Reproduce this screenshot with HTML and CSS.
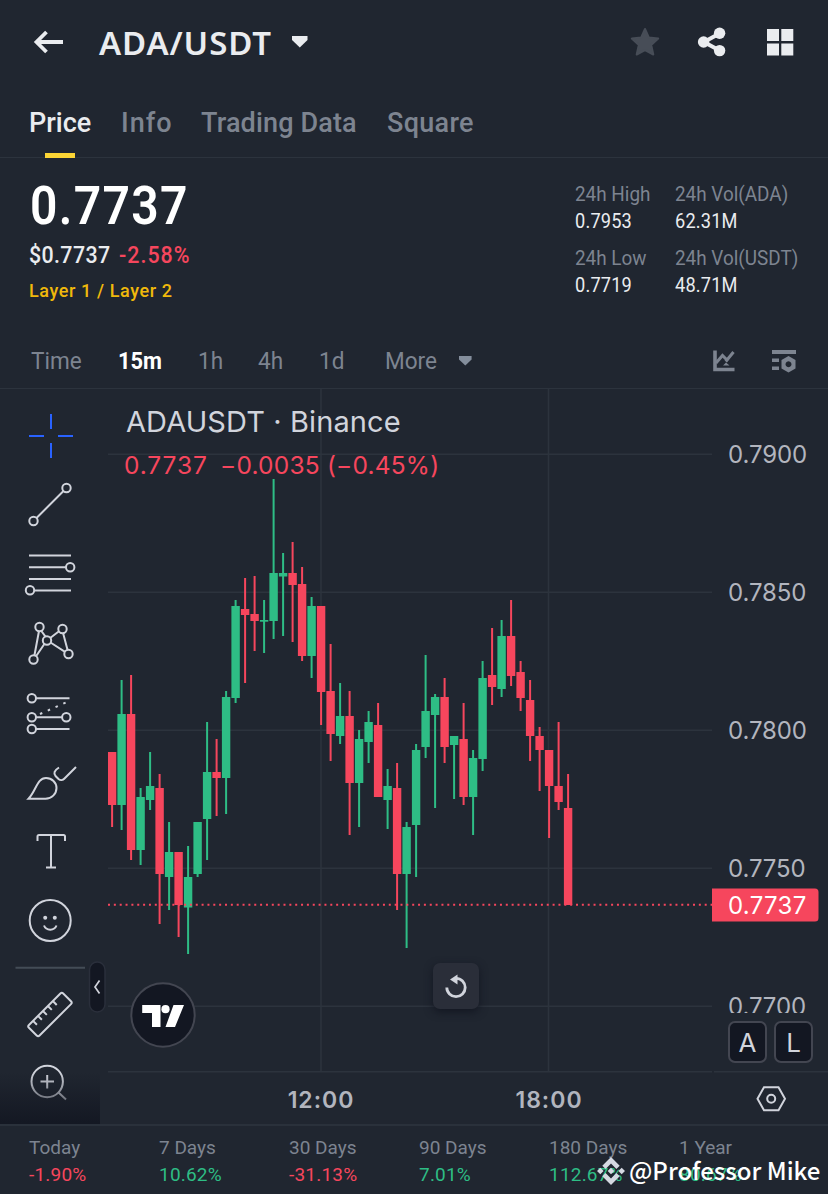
FILE: index.html
```html
<!DOCTYPE html>
<html lang="en">
<head>
<meta charset="utf-8">
<title>ADA/USDT</title>
<link rel="stylesheet" href="styles.css">
</head>
<body>
<div class="app">
  <header class="topbar">
    <svg class="back" width="32" height="26" viewBox="0 0 32 26"><path d="M30 13H5M13.500 3 3.500 13l10 10" fill="none" stroke="#eaecef" stroke-width="3.800"/></svg>
    <h1 class="pair">ADA/USDT</h1>
    <svg class="caret" width="16" height="12" viewBox="0 0 16 12"><path d="M0 0h15.500v4L7.800 11.500 0 4z" fill="#eaecef"/></svg>
    <div class="actions">
      <svg width="30" height="30" viewBox="0 0 30 30"><path d="M15 2l3.900 8.600 9.300 1-7 6.300 2.100 9.600-8.300-4.500-8.300 4.500 2.100-9.600-7-6.300 9.300-1z" fill="#474d57" stroke="#474d57" stroke-width="2" stroke-linejoin="round"/></svg>
      <svg width="30" height="30" viewBox="0 0 30 30"><path d="M22.500 6.500 7 15l15.500 8.500" fill="none" stroke="#eaecef" stroke-width="4"/><g fill="#eaecef"><circle cx="22.600" cy="6.200" r="5.700"/><circle cx="6.600" cy="15" r="5.700"/><circle cx="22.600" cy="23.600" r="5.700"/></g></svg>
      <svg width="27" height="27" viewBox="0 0 27 27"><path d="M0 0h12v12H0zM14.300 0h12v12h-12zM0 14.500h12v12H0zM14.300 14.500h12v12h-12z" fill="#eaecef"/></svg>
    </div>
  </header>

  <nav class="tabs">
    <a class="tab active t-price">Price</a><a class="tab t-info">Info</a><a class="tab t-data">Trading Data</a><a class="tab t-square">Square</a>
  </nav>

  <section class="summary">
    <div class="quote">
      <div class="last">0.7737</div>
      <div class="fiat"><span class="usd">$0.7737</span><span class="chg">-2.58%</span></div>
      <div class="tag">Layer 1 / Layer 2</div>
    </div>
    <dl class="stats">
      <div><dt>24h High</dt><dd>0.7953</dd></div>
      <div><dt>24h Vol(ADA)</dt><dd>62.31M</dd></div>
      <div><dt>24h Low</dt><dd>0.7719</dd></div>
      <div><dt>24h Vol(USDT)</dt><dd>48.71M</dd></div>
    </dl>
  </section>

  <div class="intervals">
    <span class="i-time">Time</span><span class="i-15 on">15m</span><span class="i-1h">1h</span><span class="i-4h">4h</span><span class="i-1d">1d</span><span class="i-more">More</span>
    <svg width="13" height="10" viewBox="0 0 13 10"><path d="M0 0h12.600v3.500L6.300 9.500 0 3.500z" fill="#848e9c"/></svg>
    <div class="tools">
      <svg width="22" height="22" viewBox="0 0 22 22"><g fill="none" stroke="#7d8490" stroke-width="3.600"><path d="M2 .5v19h19.500"/><path d="M3 13l6.500-7.500 4.500 4.500 6.500-8" stroke-width="3"/></g><path d="M11.500 10h4l-2 2.500zM10 15.500l3-3 3.500 3z" fill="#7d8490"/></svg>
      <svg width="25" height="24" viewBox="0 0 25 24"><g fill="#7d8490"><path d="M0 1h24v4H0zM0 9.500h7v3.500H0zM0 17.500h7V21H0z"/><path fill-rule="evenodd" d="M16.500 7l7 4v8.500l-7 4-7-4V11zm0 5.300a3 3 0 1 0 .01 0z"/></g></svg>
    </div>
  </div>

  <main class="chart">
    <aside class="toolbar">
      <svg width="108" height="735" viewBox="0 389 108 735">
        <defs><linearGradient id="fade" x1="0" y1="0" x2="0" y2="1"><stop offset="0" stop-color="#131722" stop-opacity="0"/><stop offset="1" stop-color="#131722" stop-opacity=".95"/></linearGradient></defs>
        <path d="M51 414v15M51 443v15M29 436h15M58 436h15" stroke="#2962ff" stroke-width="2"/>
        <g fill="none" stroke="#d1d4dc" stroke-width="2">
          <path d="M36.500 518 63.500 491"/><circle cx="33.500" cy="521" r="4.200"/><circle cx="66.500" cy="488" r="4.200"/>
          <path d="M29 555.500h42M29 567.200h37M29 579h42M34 590.500h37"/><circle cx="70.200" cy="567.200" r="4.200"/><circle cx="30" cy="590.300" r="4.200"/>
          <path d="M39 631 34.500 655M41 630.500l4.500 6.200M44.700 643.500 36.200 656M50.500 637.800l8.500-6.500M50.500 642.500l14.500 9.300M63 632.800l4.500 17"/><circle cx="39.500" cy="627" r="4.200"/><circle cx="62.500" cy="629" r="4.200"/><circle cx="47" cy="640.500" r="4.200"/><circle cx="33.500" cy="659.500" r="4.200"/><circle cx="68.500" cy="654" r="4.200"/>
          <path d="M36 698.200h33.500M36 717.200h26M36 729h33.500"/><path d="M40 714l27-12" stroke-dasharray="2.500 6"/><circle cx="31.800" cy="698.200" r="4.200"/><circle cx="31.800" cy="717.200" r="4.200"/><circle cx="66.300" cy="717.200" r="4.200"/><circle cx="31.800" cy="729" r="4.200"/>
          <path d="M28.500 798.700C36 791 37 778 46 778c6 0 10.500 4.500 10.500 10 0 6-5 10.700-11 10.700zM59 767.500c-5 3-5.500 6-3.500 8.500l3 3c2 1.700 4.500 1.200 6-.5L76 767"/>
          <path d="M37.500 841v-4.500q0-1.500 1.500-1.500h24.500q1.500 0 1.500 1.500v4.500M51 835v32.500M46 867.500h10"/>
          <circle cx="50.200" cy="920.500" r="20.500"/><path d="M44 925.500c2 5.500 10.500 5.500 12.500 0"/>
          <g transform="rotate(-45 50 1014.500)"><rect x="25.700" y="1007" width="48.500" height="15" rx="2"/><path d="M33.500 1007v5.500M40.500 1007v5.500M47.500 1007v5.500M54.500 1007v5.500M61.500 1007v5.500"/></g>
          <circle cx="47.200" cy="1081.500" r="15.700"/><path d="M40.500 1081.500h13.500M47.200 1075v13.500M58.500 1092.500l7.500 7"/>
        </g>
        <g fill="#d1d4dc"><circle cx="45.200" cy="917.700" r="2"/><circle cx="54.800" cy="917.700" r="2"/></g>
        <path d="M15.500 967.700h69.500" stroke="#434c56" stroke-width="2"/>
        <rect y="1072" width="100" height="52" fill="url(#fade)"/>
        <rect x="89.500" y="962" width="15.500" height="50" rx="7.700" fill="#131722" stroke="#2a2f3b" stroke-width="1.500"/>
        <path d="M99.500 980.500 95 987l4.500 6.500" fill="none" stroke="#d1d4dc" stroke-width="1.700"/>
      </svg>
    </aside>

    <div class="plot">
      <svg id="candles" width="720" height="735" viewBox="108 389 720 735">
        <path d="M108 454.300h604M108 592.300h604M108 730.300h604M108 868.300h604M108 1006.300h604M321 389v682M548.500 389v682M108 1071.700h604M714 1071.700h114" stroke="#2c333d" stroke-width="1.600" fill="none"/>
      </svg>
      <div class="legend">
        <div class="symbol">ADAUSDT · Binance</div>
        <div class="delta"><span class="close">0.7737</span><span>−0.0035 (−0.45%)</span></div>
      </div>
      <svg class="tv" width="66" height="66" viewBox="0 0 66 66"><circle cx="33" cy="33" r="31.700" fill="#131722" stroke="#434651" stroke-width="2"/><path d="M12.200 23h18.300v22h-8.500V31h-9.800zM43.500 23h10.500l-9 22h-9.500z" fill="#fff"/><circle cx="35.500" cy="27.200" r="4.100" fill="#fff"/></svg>
      <div class="reset"><svg width="24" height="26" viewBox="0 0 24 26"><path d="M2.800 14.500a9.200 9.200 0 1 0 9.200-9.200" fill="none" stroke="#d1d4dc" stroke-width="2.800"/><path d="M6 6.500 13.500 1.500v10z" fill="#d1d4dc"/></svg></div>
      <div class="scale"><span>A</span><span>L</span></div>
    </div>
  </main>

  <footer class="periods">
    <div><span>Today</span><b class="down">-1.90%</b></div>
    <div><span>7 Days</span><b>10.62%</b></div>
    <div><span>30 Days</span><b class="down">-31.13%</b></div>
    <div><span>90 Days</span><b>7.01%</b></div>
    <div><span>180 Days</span><b>112.67%</b></div>
    <div><span>1 Year</span><b>80.67%</b></div>
    <div class="credit">
      <svg width="28" height="28" viewBox="0 0 28 28" fill="#d5d9e2"><path d="M14 0l8.700 8.700-3.300 3.300L14 6.600 8.600 12 5.300 8.700zM14 28l-8.700-8.700L8.600 16l5.400 5.400 5.400-5.400 3.300 3.300zM3.300 10.700 6.600 14l-3.300 3.300L0 14zM24.700 10.700 28 14l-3.300 3.300-3.300-3.300zM14 10.700l3.300 3.300-3.300 3.300-3.300-3.300z"/></svg>
      <span>@Professor Mike</span>
    </div>
  </footer>
</div>
<script src="chart.js"></script>
</body>
</html>
```
FILE: styles.css
```css
* { box-sizing: border-box; }
body { margin: 0; background: #202630; color: #eaecef; font-family: Roboto, "Liberation Sans", sans-serif; }
svg { display: block; flex: none; }
.app { width: 828px; height: 1194px; overflow: hidden; display: flex; flex-direction: column; }

.topbar { height: 87px; flex: none; display: flex; align-items: center; padding: 0 34px 0 33px; }
.pair { margin: -2px 0 0 34px; width: 194px; font: 600 33px/40px "Noto Sans", sans-serif; letter-spacing: .9px; white-space: nowrap; }
.back { margin-top: -3px; }
.caret { margin-top: -4px; margin-left: -1px; }
.actions { margin-left: auto; margin-top: -3px; display: flex; align-items: center; gap: 37px; }
.actions svg:last-child { margin-left: 3px; }

.tabs { height: 71px; flex: none; display: flex; padding: 16px 0 0 29px; border-bottom: 1px solid #2c333d; font-weight: 500; font-size: 27px; line-height: 40px; }
.tab { position: relative; color: #7d8490; height: 55px; white-space: nowrap; }
.tab.active { color: #eaecef; }
.tab.active::after { content: ""; position: absolute; left: 16px; bottom: 0; width: 30px; height: 5px; background: #fcd535; }
.t-price { width: 92px; }
.t-info { width: 80px; letter-spacing: 1px; }
.t-data { width: 186px; letter-spacing: .15px; }
.t-square { letter-spacing: .3px; }

.summary { height: 177px; flex: none; display: flex; justify-content: space-between; padding: 18px 24px 0 29px; }
.last { font-weight: 600; font-size: 54px; line-height: 60px; color: #fff; letter-spacing: 1.5px; transform: scaleX(.89); transform-origin: left; padding-left: 1px; }
.fiat { display: flex; font-weight: 500; font-size: 23px; line-height: 30px; margin-top: 5px; }
.fiat span { transform: scaleX(.93); transform-origin: left; letter-spacing: .4px; }
.usd { width: 90px; }
.fiat .chg { color: #f6465d; letter-spacing: 1.1px; }
.tag { font-weight: 500; font-size: 18px; line-height: 24px; color: #f0b90b; margin-top: 8px; letter-spacing: .6px; }
.stats { margin: 5px 0 0; display: grid; grid-template-columns: 100px 129px; grid-auto-rows: 63.500px; font-size: 20px; line-height: 27px; white-space: nowrap; }
.stats dt { color: #7d8490; transform: scaleX(.945); transform-origin: left; }
.stats dd { margin: 0; transform: scaleX(.91); transform-origin: left; letter-spacing: .2px; }

.intervals { height: 54px; flex: none; display: flex; align-items: center; padding: 0 31px 1px 31px; border-bottom: 1px solid #2c333d; font-size: 24px; color: #7d8490; white-space: nowrap; }
.intervals span { transform: scaleX(.94); transform-origin: left; }
.intervals .on { color: #fff; font-weight: 700; transform: scaleX(.91); }
.i-time { width: 87px; }
.i-15 { width: 80px; }
.i-1h { width: 60px; }
.i-4h { width: 61px; }
.i-1d { width: 66px; }
.i-more { width: 74px; }
.tools { margin-left: auto; display: flex; gap: 37px; align-items: center; }

.chart { height: 735px; flex: none; display: grid; grid-template-columns: 108px 720px; }
.plot { position: relative; font-family: Inter, sans-serif; }
.plot text { font-family: Inter, sans-serif; font-size: 24px; letter-spacing: -.1px; }
.plot .hour { font-weight: 600; font-size: 23px; letter-spacing: 1px; }
.legend { position: absolute; left: 16px; top: 13px; }
.symbol { font-size: 29px; line-height: 40px; color: #d1d4dc; letter-spacing: .1px; padding-left: 2px; }
.delta { display: flex; font-size: 24.500px; line-height: 45px; color: #f6465d; letter-spacing: .2px; margin-top: 1px; }
.delta .close { width: 96px; letter-spacing: .9px; }
.tv { position: absolute; left: 22px; top: 593px; }
.reset { position: absolute; left: 325px; top: 574px; width: 46px; height: 46px; border-radius: 7px; background: #2a2e39; box-shadow: 0 3px 8px #131722; display: flex; align-items: center; justify-content: center; }
.scale { position: absolute; left: 620px; top: 632px; display: flex; gap: 7px; }
.scale span { width: 39px; height: 42px; border: 2px solid #434651; border-radius: 7px; background: #131722; color: #d1d4dc; font-size: 26px; line-height: 39px; text-align: center; }

.periods { position: relative; flex: 1; border-top: 2px solid #2a313b; display: grid; grid-template-columns: repeat(6, 130px); padding: 8px 0 0 29px; font-size: 19px; }
.periods div { line-height: 27px; }
.periods span, .periods b { display: block; white-space: nowrap; }
.periods div > span { color: #7d8490; }
.periods b { font-weight: 400; color: #2ebd85; letter-spacing: .2px; }
.periods b.down { color: #f6465d; }
.periods .credit { position: absolute; left: 597px; top: 28px; display: flex; align-items: center; gap: 4px; }
.periods .credit svg { margin-top: 1px; }
.periods .credit span { color: #fff; font: 500 24px/34px "Noto Sans CJK SC", sans-serif; margin-top: -1px; }
```
FILE: chart.js
```js
// Each candle: [direction, high, open/close top, open/close bottom, low] in chart pixels
const candles = [
  ["d",752,752,805,827],["u",680,714,805,830],["d",675,714,850,860],["u",788,797,850,865],["u",752,786,800,810],
  ["d",774,788,874,924],["u",822,852,877,910],["d",852,852,905,937],["u",846,877,907.5,954],["u",822,822,874,877],
  ["u",722,772,819,860],["d",739,772,778,816],["u",691,697,778,814],["u",600,606,698,703],["d",578,609,615,683],
  ["d",576,614,621,651],["u",600,620,621.7,653],["u",479,573,621,639],["u",553,573,576.5,636],["d",542,573,585,642],
  ["d",567,584,656,661],["u",597,606,656,678],["d",606,606,692,725],["d",644,691,734,761],["u",683,716,736,744],
  ["d",691,716,783,835],["u",730,739,783,827],["u",711,722,742,763],["d",703,725,797,797],["u",769,786,800,829],
  ["d",763,788,874,910],["u",822,827,874,948],["u",744,750,825,877],["u",655,711,747,758],["u",694,697,715,808],
  ["d",678,697,747,763],["u",736,736,745,799],["d",703,739,797,805],["u",750,758,797,835],["u",661,678,759,771],
  ["d",628,675,687,705],["u",620,636,689,697],["d",600,636,676,686],["d",661,672,698,711],["d",680,700,736,761],
  ["d",727,736,750,791],["d",750,750,786,838],["d",722,786,802,810],["d",774,808,905,905]
];
let out = "";
candles.forEach(([dir, high, top, bottom, low], i) => {
  const x = 112.1 + i * 9.5;
  const color = dir === "u" ? "#2ebd85" : "#f6465d";
  out += `<rect x="${x - 1}" y="${high}" width="2" height="${low - high}" fill="${color}"/>`;
  out += `<rect x="${x - 4.2}" y="${top}" width="8.4" height="${bottom - top}" fill="${color}"/>`;
});
out += '<path d="M108 904.800h604" stroke="#f6465d" stroke-width="2" stroke-dasharray="2 3.850"/>';
out += '<path d="M712 888.500h103a3.500 3.500 0 0 1 3.500 3.500v26a3.500 3.500 0 0 1-3.500 3.500H712z" fill="#f6465d"/>';
out += '<clipPath id="axis"><rect x="712" y="389" width="116" height="624"/></clipPath><g clip-path="url(#axis)" fill="#b2b5be">';
["0.7900", "0.7850", "0.7800", "0.7750", "0.7700"].forEach((label, i) => {
  out += `<text x="728" y="${463 + i * 138}">${label}</text>`;
});
out += '</g><text x="728" y="913.500" fill="#fff" style="letter-spacing:.3px">0.7737</text>';
out += '<g fill="#b2b5be" text-anchor="middle"><text x="321" y="1107.500" class="hour">12:00</text><text x="549" y="1107.500" class="hour">18:00</text></g>';
out += '<g fill="none" stroke="#d1d4dc" stroke-width="2"><path d="M757.500 1098.700l6.500-11.500h14.500l6.500 11.500-6.500 11.500H764z"/><circle cx="771.200" cy="1098.700" r="4"/></g>';
document.getElementById("candles").insertAdjacentHTML("beforeend", out);
```
